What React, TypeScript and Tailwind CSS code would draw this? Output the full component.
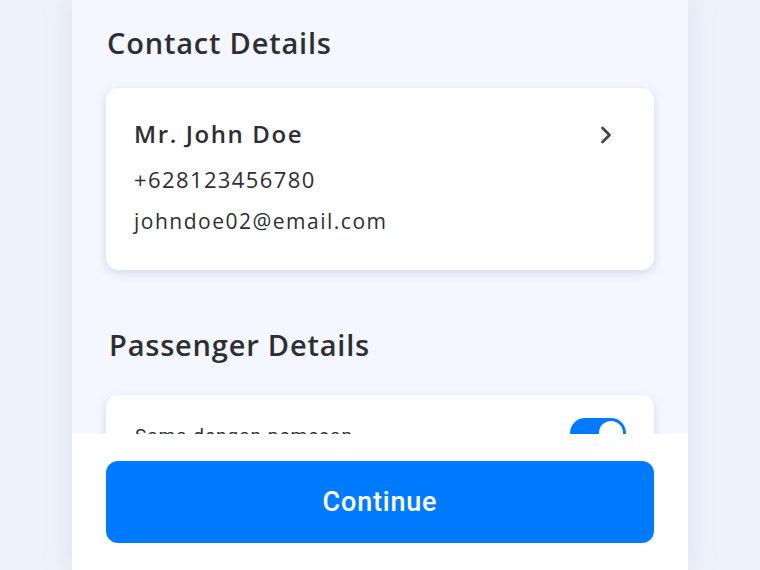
import React from 'react';

const font = { fontFamily: '"Open Sans", "Noto Sans", sans-serif' };
const roboto = { fontFamily: 'Roboto, "Noto Sans", sans-serif' };

export default function App() {
  return (
    <div className="w-[760px] h-[570px] overflow-hidden bg-[#eef2fb] flex justify-center" style={font}>
      <div className="relative w-[616px] h-[570px] bg-[#f4f7fe] shadow-[0_0_24px_rgba(180,190,220,0.35)]">
        <div className="px-[34px] pt-[22px]">
          <h2 className="text-[29px] leading-[42px] font-semibold text-[#2e2f35] pl-[1px] tracking-[0.8px]">Contact Details</h2>
          <div className="mt-[24px] bg-white rounded-[12px] shadow-[0_3px_10px_rgba(150,160,190,0.35)] px-[28px] pt-[30px] pb-[34px] flex justify-between">
            <div className="flex flex-col">
              <span className="text-[24px] leading-[32px] font-semibold text-[#2e2f35] tracking-[1.6px]">Mr. John Doe</span>
              <span className="mt-[14px] text-[22px] leading-[30px] text-[#2e2f35] tracking-[1.4px]">+628123456780</span>
              <span className="mt-[12px] text-[21px] leading-[30px] text-[#2e2f35] tracking-[1.5px]">johndoe02@email.com</span>
            </div>
            <svg width="28" height="28" viewBox="0 0 24 24" fill="none" stroke="#44464d" strokeWidth="2.4" strokeLinecap="round" strokeLinejoin="round" className="mt-[3px] mr-[6px]">
              <path d="M9 6l6 6-6 6" />
            </svg>
          </div>
          <h2 className="mt-[54px] text-[29px] leading-[42px] font-semibold text-[#2e2f35] pl-[3px] tracking-[0.8px]">Passenger Details</h2>
          <div className="mt-[29px] bg-white rounded-[12px] shadow-[0_3px_10px_rgba(150,160,190,0.35)] px-[29px] pt-[23px] pb-[40px] flex justify-between items-start">
            <span className="mt-[4px] text-[19px] leading-[28px] text-[#2e2f35] tracking-[1px]" style={roboto}>Sama dengan pemesan</span>
            <div className="w-[56px] h-[30px] rounded-full bg-[#007bff] flex items-center justify-end pr-[3px] -mr-[1px]">
              <div className="w-[24px] h-[24px] rounded-full bg-white" />
            </div>
          </div>
        </div>
        <div className="absolute left-0 right-0 bottom-0 h-[136px] bg-white px-[34px] pt-[27px]">
          <button className="w-full h-[82px] rounded-[12px] bg-[#007bff] text-white text-[27px] font-medium tracking-[0.8px]" style={roboto}>Continue</button>
        </div>
      </div>
    </div>
  );
}
